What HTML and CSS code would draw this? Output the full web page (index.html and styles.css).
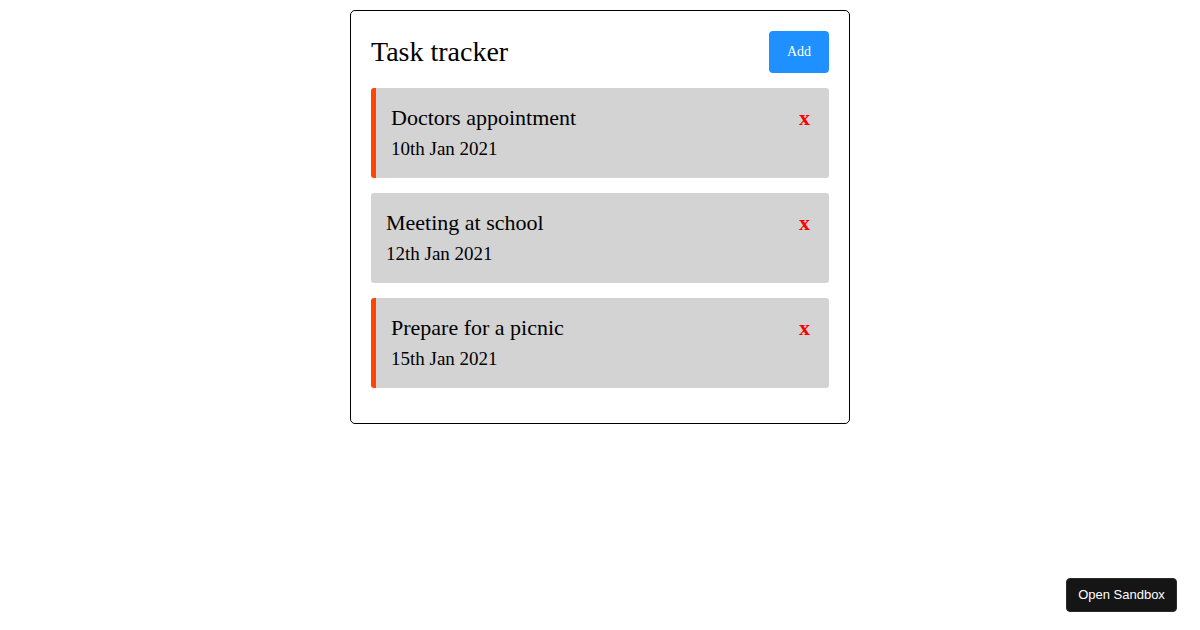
FILE: index.html
```html
<!DOCTYPE html>
<html lang="en">
<head>
<meta charset="utf-8">
<title>Task tracker</title>
<link rel="stylesheet" href="styles.css">
</head>
<body>
<div class="container">
  <header class="header">
    <h1 class="title">Task tracker</h1>
    <button class="btn">Add</button>
  </header>
  <div class="tasks">
    <div class="task reminder">
      <div class="task-row"><h3 class="task-name">Doctors appointment</h3><span class="del">x</span></div>
      <p class="task-date">10th Jan 2021</p>
    </div>
    <div class="task">
      <div class="task-row"><h3 class="task-name">Meeting at school</h3><span class="del">x</span></div>
      <p class="task-date">12th Jan 2021</p>
    </div>
    <div class="task reminder">
      <div class="task-row"><h3 class="task-name">Prepare for a picnic</h3><span class="del">x</span></div>
      <p class="task-date">15th Jan 2021</p>
    </div>
  </div>
</div>
<a class="sandbox" href="#">Open Sandbox</a>
</body>
</html>
```
FILE: styles.css
```css
* { box-sizing: border-box; }
body {
  margin: 0;
  background: #fff;
  font-family: "Liberation Serif", "Times New Roman", serif;
  color: #000;
}
.container {
  width: 500px;
  margin: 10px auto 0;
  border: 1px solid #000;
  border-radius: 5px;
  padding: 20px 20px 35px;
}
.header {
  display: flex;
  justify-content: space-between;
  align-items: center;
  margin-bottom: 15px;
}
.title {
  margin: 0;
  font-size: 28px;
  font-weight: normal;
  line-height: 32px;
}
.btn {
  width: 60px;
  height: 42px;
  border: none;
  border-radius: 4px;
  background: #1e90ff;
  color: #fff;
  font-family: "Liberation Serif", serif;
  font-size: 14px;
  padding: 0;
}
.tasks {
  display: flex;
  flex-direction: column;
  gap: 15px;
}
.task {
  background: #d3d3d3;
  border-radius: 3px;
  padding: 17px 19px 18px 15px;
  height: 90px;
}
.task.reminder {
  border-left: 5px solid #ff4500;
}
.task-row {
  display: flex;
  justify-content: space-between;
  align-items: baseline;
}
.task-name {
  margin: 0;
  font-size: 22px;
  font-weight: normal;
  line-height: 25px;
}
.del {
  color: #ff0000;
  font-weight: bold;
  font-size: 22px;
  line-height: 25px;
}
.task-date {
  margin: 8px 0 0;
  font-size: 19px;
  line-height: 22px;
}
.sandbox {
  position: fixed;
  right: 23px;
  bottom: 18px;
  width: 111px;
  height: 34px;
  display: flex;
  align-items: center;
  justify-content: center;
  padding-bottom: 1px;
  background: #151515;
  border: 1px solid #2a2a2a;
  border-radius: 4px;
  color: #fff;
  text-decoration: none;
  font-family: "Liberation Sans", Arial, sans-serif;
  font-size: 13px;
}
```
